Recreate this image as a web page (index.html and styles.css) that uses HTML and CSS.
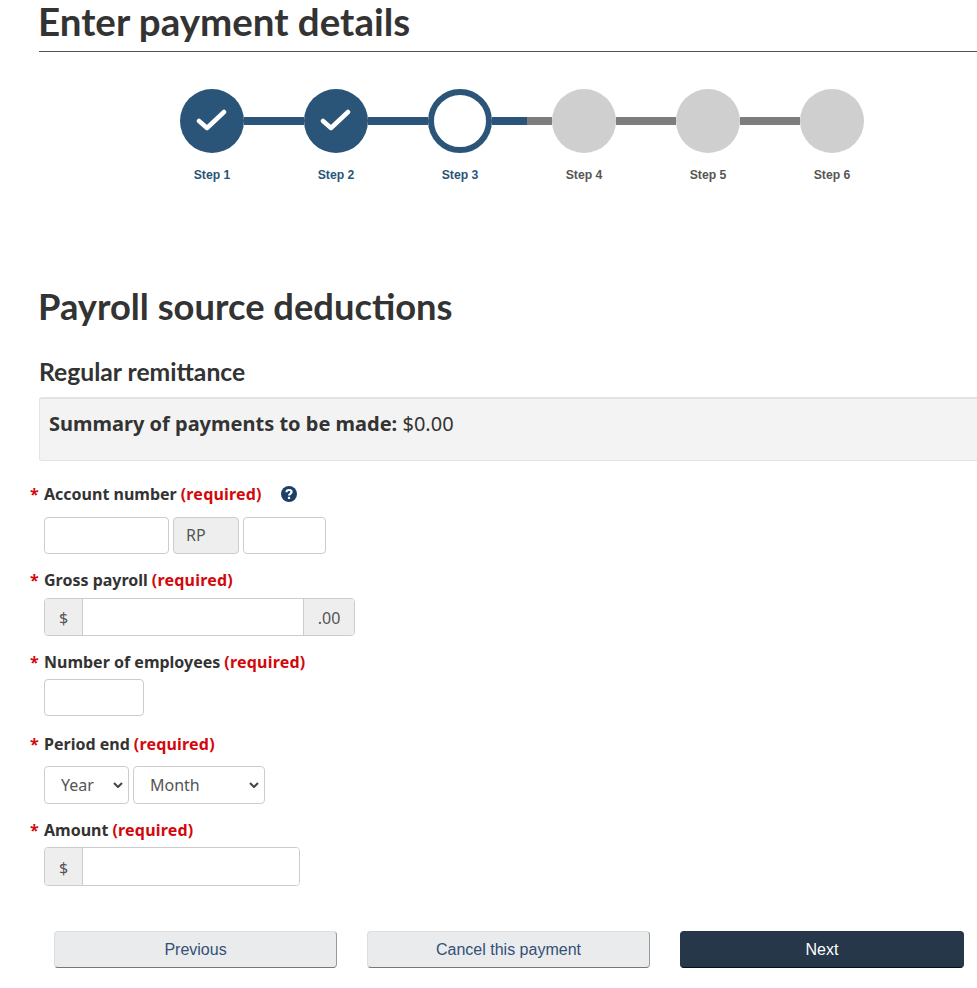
FILE: index.html
```html
<!DOCTYPE html>
<html lang="en">
<head>
  <meta charset="UTF-8">
  <title>Enter payment details</title>
  <meta name="viewport" content="width=device-width,initial-scale=1">
  <link rel="stylesheet" href="styles.css">
</head>
<body>
  <h1>Enter payment details</h1>

  <div class="stepper">
    <div class="track">
      <span class="dot done"><svg viewBox="0 0 32 24" width="32" height="24"><path d="M3 13l8 7L28 4"/></svg></span>
      <span class="bar"></span>
      <span class="dot done"><svg viewBox="0 0 32 24" width="32" height="24"><path d="M3 13l8 7L28 4"/></svg></span>
      <span class="bar"></span>
      <span class="dot current"></span>
      <span class="bar partial"></span>
      <span class="dot"></span>
      <span class="bar todo"></span>
      <span class="dot"></span>
      <span class="bar todo"></span>
      <span class="dot"></span>
    </div>
    <div class="step-labels">
      <span class="active">Step 1</span>
      <span class="active">Step 2</span>
      <span class="active">Step 3</span>
      <span>Step 4</span>
      <span>Step 5</span>
      <span>Step 6</span>
    </div>
  </div>

  <h2>Payroll source deductions</h2>
  <h3>Regular remittance</h3>

  <div class="summary"><strong>Summary of payments to be made:</strong> $0.00</div>

  <form>
    <div class="field">
      <div class="label"><span class="star">*</span> Account number <span class="req">(required)</span>
        <svg class="help" viewBox="0 0 16 16" width="16" height="16"><circle cx="8" cy="8" r="8"/><path d="M5.4 6.2C5.5 4.7 6.6 4 8 4c1.500 0 2.600.8 2.600 2.100C10.600 7.800 8 7.800 8 9.600"/><rect x="6.900" y="10.800" width="2.200" height="2.200"/></svg>
      </div>
      <div class="row">
        <input class="input acct-a" type="text">
        <span class="input acct-rp">RP</span>
        <input class="input acct-b" type="text">
      </div>
    </div>

    <div class="field gross">
      <div class="label"><span class="star">*</span> Gross payroll <span class="req">(required)</span></div>
      <div class="group w-gross">
        <span class="addon">$</span>
        <input type="text">
        <span class="addon end">.00</span>
      </div>
    </div>

    <div class="field employees">
      <div class="label"><span class="star">*</span> Number of employees <span class="req">(required)</span></div>
      <input class="input w-emp" type="text">
    </div>

    <div class="field period">
      <div class="label"><span class="star">*</span> Period end <span class="req">(required)</span></div>
      <div class="row">
        <div class="select w-year">
          <select class="input"><option>Year</option></select>
          <svg viewBox="0 0 10 6" width="10" height="6"><path d="M1 1l4 4 4-4"/></svg>
        </div>
        <div class="select w-month">
          <select class="input"><option>Month</option></select>
          <svg viewBox="0 0 10 6" width="10" height="6"><path d="M1 1l4 4 4-4"/></svg>
        </div>
      </div>
    </div>

    <div class="field amount">
      <div class="label"><span class="star">*</span> Amount <span class="req">(required)</span></div>
      <div class="group w-amount">
        <span class="addon">$</span>
        <input type="text">
      </div>
    </div>

    <div class="actions">
      <button type="button" class="btn">Previous</button>
      <button type="button" class="btn">Cancel this payment</button>
      <button type="button" class="btn primary">Next</button>
    </div>
  </form>
</body>
</html>
```

FILE: styles.css
```css
*{margin:0;padding:0;box-sizing:border-box}
html,body{height:100%;overflow:hidden}
body{font-family:"Noto Sans",sans-serif;color:#333;background:#fff;padding-left:39px}

h1{font-family:Lato,sans-serif;font-weight:700;font-size:38.500px;line-height:42px;height:52px;border-bottom:1px solid #555;color:#333;text-indent:-1px}
h2{font-family:Lato,sans-serif;font-weight:700;font-size:36.300px;line-height:42px;margin-top:102px;margin-left:-1px;color:#333}
h3{font-family:Lato,sans-serif;font-weight:700;font-size:24.700px;line-height:30px;margin-top:30px;color:#333}

.stepper{margin:37px 0 0 111px}
.track{display:flex;align-items:center;margin-left:30px}
.dot{width:64px;height:64px;border-radius:50%;background:#cfcfcf;flex:none;display:flex;align-items:center;justify-content:center}
.dot.done{background:#2a5578}
.dot.current{background:#fff;border:6px solid #2a5578}
.dot svg{fill:none;stroke:#fff;stroke-width:4.500;stroke-linecap:round;stroke-linejoin:round;width:32px;height:24px;margin-top:-2px}
.bar{width:60px;height:8px;flex:none;background:#2a5578}
.bar.todo{background:#7d7d7d}
.bar.partial{background:linear-gradient(to right,#2a5578 35px,#7d7d7d 35px)}
.step-labels{display:grid;grid-template-columns:repeat(6,124px);margin-top:14px;font-family:"Liberation Sans",sans-serif;font-weight:700;font-size:12.200px;line-height:16px;text-align:center;color:#555}
.step-labels .active{color:#2a5578}

.summary{margin-top:10px;height:64px;background:#f3f3f3;border:1px solid #e3e3e3;border-top-width:2px;border-right:none;border-radius:3px 0 0 3px;padding:12px 9px;font-size:20px;line-height:26px}

form{margin-left:-8px;margin-top:22px}
.label{font-size:16px;font-weight:700;line-height:22px;color:#333;display:flex;align-items:center;gap:4px;white-space:nowrap}
.star,.req{color:#d3080c}
.req{letter-spacing:.2px}
.star{font-size:16px;width:10px;margin-left:-1px;flex:none}
.help{fill:#1c3f66;margin-left:15px;flex:none}
.help path{fill:none;stroke:#fff;stroke-width:2.200}
.help rect{fill:#fff}

.row{display:flex;gap:4px;margin:12px 0 0 13px}
.input{display:block;height:37px;border:1px solid #ccc;border-radius:4px;background:#fff;font-family:"Noto Sans",sans-serif;font-size:16px;color:#555}
.acct-a{width:125px}
.acct-rp{width:66px;background:#eee;padding-left:12px;line-height:35px}
.acct-b{width:83px}

.field.gross{margin-top:15px}
.group{display:flex;height:38px;margin:7px 0 0 13px;border:1px solid #ccc;border-radius:4px;overflow:hidden}
.group input{flex:1;min-width:0;border:none;outline:none}
.addon{width:38px;flex:none;background:#eee;border-right:1px solid #ccc;font-size:16px;line-height:38px;text-align:center;color:#555}
.addon.end{width:51px;border-right:none;border-left:1px solid #ccc}
.w-gross{width:311px}
.amount .w-amount{width:256px;height:39px;margin-top:6px}
.w-amount .addon{line-height:40px}

.field.employees{margin-top:15px}
.w-emp{width:100px;margin:6px 0 0 13px}
.field.period{margin-top:17px}
.field.period .row{margin-top:11px}
.select{position:relative}
.select select{appearance:none;width:100%;height:38px;padding-left:16px}
.select svg{position:absolute;right:6px;top:16px;fill:none;stroke:#444;stroke-width:2}
.w-year{width:85px}
.w-month{width:132px}
.field.amount{margin-top:15px}

.actions{display:flex;gap:30px;margin:45px 0 0 23px}
.btn{width:283px;height:37px;background:#eaebed;border:1px solid #dcdee1;border-bottom-color:#777;border-right-color:#999;border-radius:4px;font-family:"Liberation Sans",sans-serif;font-size:16px;color:#335075}
.btn.primary{width:284px;background:#26374a;border-color:#26374a;border-bottom-color:#0b0f14;color:#fff}
```
